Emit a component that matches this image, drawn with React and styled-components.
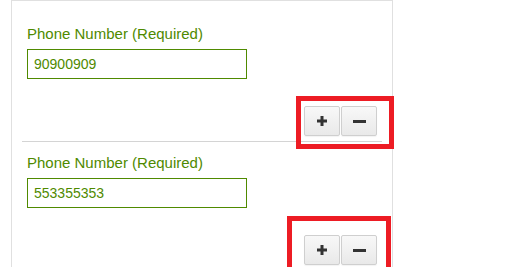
import React from 'react';
import styled, { createGlobalStyle } from 'styled-components';

const GlobalStyle = createGlobalStyle`
  html, body {
    margin: 0;
    padding: 0;
    height: 100%;
    overflow: hidden;
    background: #fff;
    font-family: "Liberation Sans", Arial, sans-serif;
  }
`;

const phones = [
  { id: 1, value: '90900909', mark: { top: -10, left: -8, width: 98, height: 53 } },
  { id: 2, value: '553355353', mark: { top: -19, left: -17, width: 104, height: 60 } },
];

const App = () => (
  <>
    <GlobalStyle />
    <Panel>
      {phones.map(({ id, value, mark }) => (
        <PhoneSection key={id}>
          <Label htmlFor={`phone-${id}`}>Phone Number (Required)</Label>
          <Input id={`phone-${id}`} defaultValue={value} />
          <Actions>
            <ButtonGroup>
              <StepButton type="button" aria-label="Add phone">
                <svg width="10" height="10" viewBox="0 0 10 10">
                  <path d="M3.5 0h3v3.5H10v3H6.5V10h-3V6.5H0v-3h3.5z" fill="#333" />
                </svg>
              </StepButton>
              <StepButton type="button" aria-label="Remove phone">
                <svg width="13" height="3" viewBox="0 0 13 3">
                  <rect width="13" height="3" fill="#333" />
                </svg>
              </StepButton>
              <Highlight
                $top={mark.top}
                $left={mark.left}
                $width={mark.width}
                $height={mark.height}
              />
            </ButtonGroup>
          </Actions>
        </PhoneSection>
      ))}
    </Panel>
  </>
);

// STYLES
const Panel = styled.div`
  box-sizing: border-box;
  margin-left: 11px;
  width: 382px;
  min-height: 100vh;
  padding-top: 12px;
  border: 1px solid #e0e0e0;
  border-bottom: none;
`;

const PhoneSection = styled.section`
  display: flex;
  flex-direction: column;
  align-items: flex-start;
  margin: 0 10px;
  padding: 12px 5px 5px;
  border-bottom: 1px solid #d4d4d4;
`;

const Label = styled.label`
  font-size: 15px;
  line-height: 17px;
  color: #4f8a00;
  margin-bottom: 7px;
`;

const Input = styled.input`
  box-sizing: border-box;
  width: 220px;
  height: 30px;
  padding: 0 6px;
  border: 1px solid #4f8a00;
  border-radius: 0;
  font-family: inherit;
  font-size: 14px;
  color: #4f8a00;
  outline: none;
`;

const Actions = styled.div`
  display: flex;
  justify-content: flex-end;
  align-self: stretch;
  margin-top: 27px;
`;

const ButtonGroup = styled.div`
  position: relative;
  display: flex;
  gap: 1px;
`;

const StepButton = styled.button`
  display: flex;
  align-items: center;
  justify-content: center;
  box-sizing: border-box;
  width: 36px;
  height: 30px;
  padding: 0;
  border: 1px solid #cfcfcf;
  border-radius: 2px;
  background: linear-gradient(#f8f8f8, #e9e9e9);
  box-shadow: 0 1px 1px rgba(0, 0, 0, 0.05);
  cursor: pointer;
`;

const Highlight = styled.div`
  position: absolute;
  top: ${({ $top }) => $top}px;
  left: ${({ $left }) => $left}px;
  width: ${({ $width }) => $width}px;
  height: ${({ $height }) => $height}px;
  box-sizing: border-box;
  border: 5px solid #ed1c24;
  pointer-events: none;
`;

export default App;
